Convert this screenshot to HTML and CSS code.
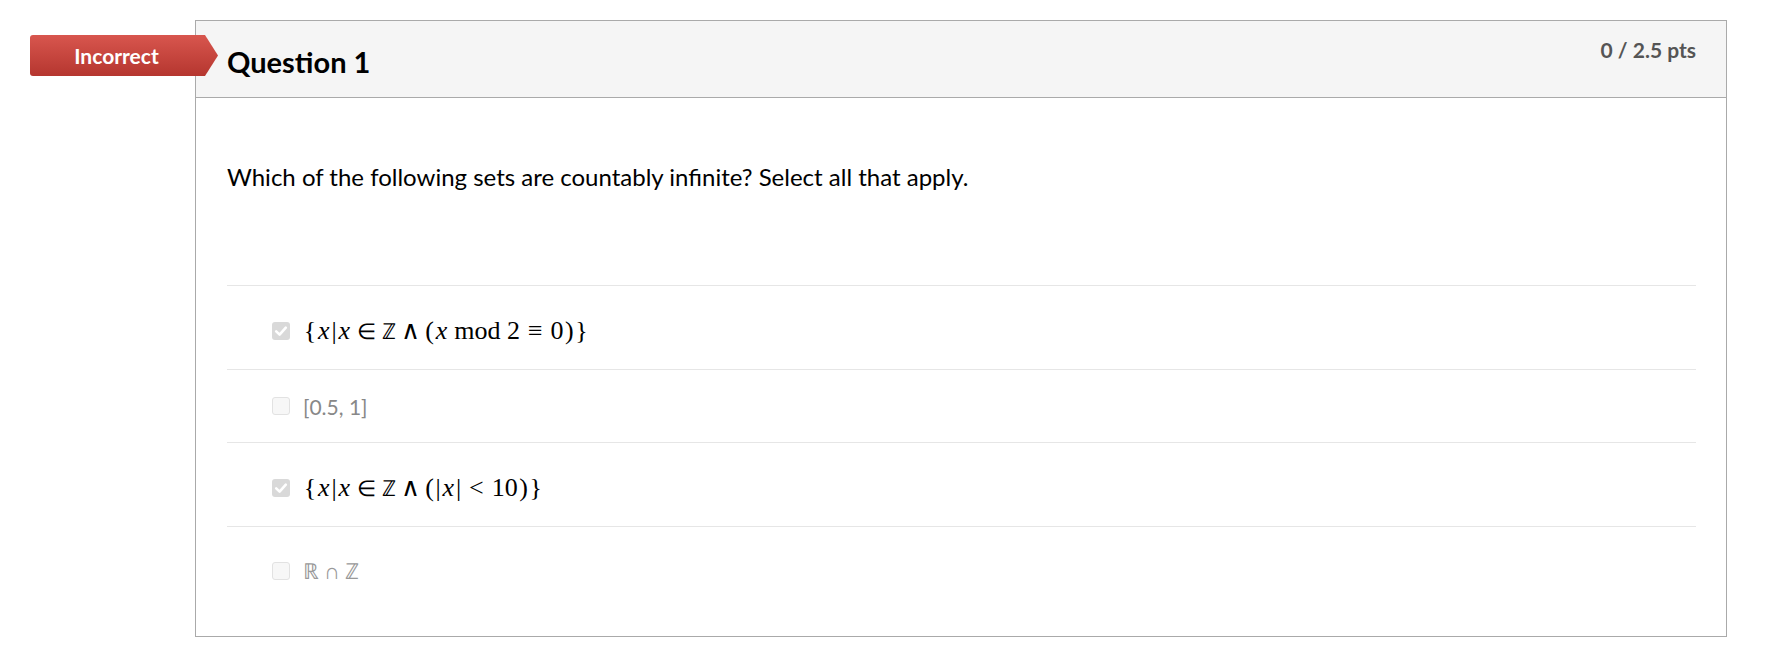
FILE: index.html
```html
<!DOCTYPE html>
<html lang="en">
<head>
<meta charset="utf-8">
<title>Question 1</title>
<link rel="stylesheet" href="styles.css">
</head>
<body>
<div class="page">
  <div class="question">
    <div class="badge"><span class="badge-text">Incorrect</span></div>
    <div class="q-header">
      <h2 class="q-title">Question 1</h2>
      <div class="q-points">0 / 2.5 pts</div>
    </div>
    <div class="q-body">
      <p class="q-text">Which of the following sets are countably infinite? Select all that apply.</p>
      <div class="answers">
        <div class="answer tall">
          <span class="cb checked"><svg viewBox="0 0 18 18" width="18" height="18"><path d="M4.2 9.4 L7.6 12.6 L13.8 5.6" fill="none" stroke="#fff" stroke-width="2.6" stroke-linecap="round" stroke-linejoin="round"/></svg></span>
          <span class="math"><span class="mo">{</span><span class="mi">x</span><span class="mo">|</span><span class="mi">x</span><span class="mrel sym">∈</span><span class="ds">ℤ</span><span class="mbin sym wedge">∧</span><span class="mo">(</span><span class="mi">x</span><span class="mbin">mod</span><span class="mn">2</span><span class="mrel">≡</span><span class="mn">0</span><span class="mo">)</span><span class="mo">}</span></span>
        </div>
        <div class="answer short">
          <span class="cb"></span>
          <span class="plain">[0.5, 1]</span>
        </div>
        <div class="answer tall">
          <span class="cb checked"><svg viewBox="0 0 18 18" width="18" height="18"><path d="M4.2 9.4 L7.6 12.6 L13.8 5.6" fill="none" stroke="#fff" stroke-width="2.6" stroke-linecap="round" stroke-linejoin="round"/></svg></span>
          <span class="math"><span class="mo">{</span><span class="mi">x</span><span class="mo">|</span><span class="mi">x</span><span class="mrel sym">∈</span><span class="ds">ℤ</span><span class="mbin sym wedge">∧</span><span class="mo">(</span><span class="mo">|</span><span class="mi">x</span><span class="mo">|</span><span class="mrel">&lt;</span><span class="mn">10</span><span class="mo">)</span><span class="mo">}</span></span>
        </div>
        <div class="answer tall last">
          <span class="cb"></span>
          <span class="math muted"><span class="ds">ℝ</span><span class="mbin sym">∩</span><span class="ds">ℤ</span></span>
        </div>
      </div>
    </div>
  </div>
</div>
</body>
</html>
```
FILE: styles.css
```css
body {
  margin: 0;
  background: #ffffff;
  font-family: Lato, "Noto Sans", sans-serif;
  color: #000;
}

.page {
  padding: 20px 0 0 195px;
}

.question {
  position: relative;
  width: 1532px;
  box-sizing: border-box;
  border: 1px solid #aaaaaa;
}

.badge {
  position: absolute;
  left: -166px;
  top: 14px;
  width: 188px;
  height: 41px;
  background: linear-gradient(#d8564e, #b5362f);
  border-radius: 3px 0 0 3px;
  clip-path: polygon(0 0, 175px 0, 188px 50%, 175px 100%, 0 100%);
  display: flex;
  align-items: center;
}

.badge-text {
  width: 173px;
  text-align: center;
  color: #fff;
  font-weight: 700;
  font-size: 21px;
  line-height: 24px;
  padding-top: 1px;
}

.q-header {
  display: flex;
  justify-content: space-between;
  align-items: flex-start;
  height: 77px;
  box-sizing: border-box;
  background: #f5f5f5;
  border-bottom: 1px solid #aaaaaa;
  padding: 0 30px 0 31px;
}

.q-title {
  margin: 0;
  padding-top: 24px;
  font-size: 29px;
  line-height: 34px;
  font-weight: 700;
  color: #000;
}

.q-points {
  padding-top: 17px;
  font-size: 21px;
  line-height: 24px;
  font-weight: 700;
  color: #555555;
}

.q-body {
  padding: 64px 30px 26px 31px;
}

.q-text {
  margin: 0;
  font-size: 24px;
  line-height: 30px;
  color: #000;
}

.answers {
  margin-top: 93px;
}

.answer {
  display: flex;
  align-items: center;
  align-content: flex-start;
  flex-wrap: wrap;
  gap: 13px;
  padding-left: 45px;
  border-top: 1px solid #e6e6e6;
  box-sizing: border-box;
}

.answer.tall {
  height: 84px;
  padding-top: 35px;
}

.answer.short {
  height: 73px;
  padding-top: 27px;
}

.cb {
  width: 18px;
  height: 18px;
  box-sizing: border-box;
  border-radius: 3px;
  background: #f7f7f7;
  border: 1px solid #e2e2e2;
  display: flex;
}

.cb.checked {
  background: #d9d9d9;
  border: none;
}

.plain {
  font-size: 21px;
  line-height: 18px;
  color: #888888;
  position: relative;
  top: 1px;
}

.math {
  font-family: "Liberation Serif", "DejaVu Serif", serif;
  font-size: 26px;
  line-height: 18px;
  color: #000;
  white-space: nowrap;
}

.math.muted {
  color: #999999;
}

.mi {
  font-style: italic;
  padding: 0 0.04em;
}

.mo, .mn {
  padding: 0 0.03em;
}

.mrel {
  margin: 0 0.2778em;
}

.mbin {
  margin: 0 0.2222em;
}

.sym {
  font-family: "DejaVu Sans", sans-serif;
  font-weight: 200;
  font-size: 0.85em;
}

.sym.wedge {
  font-size: 1em;
  margin: 0 0.18em;
}

.ds {
  font-family: "DejaVu Sans", sans-serif;
  font-weight: 200;
  font-size: 0.85em;
}
```
